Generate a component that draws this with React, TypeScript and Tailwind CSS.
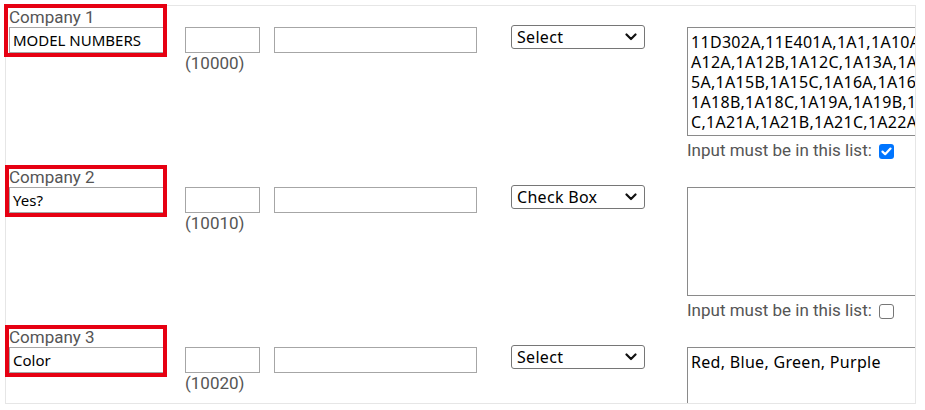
import React from "react";

const labelFont = { fontFamily: "Roboto, 'Liberation Sans', sans-serif" };
const fieldFont = { fontFamily: "'Noto Sans', 'Open Sans', sans-serif" };

function Chevron() {
  return (
    <svg width="12" height="8" viewBox="0 0 12 8" className="shrink-0">
      <polyline points="1.5,1.5 6,6 10.5,1.5" fill="none" stroke="#111" strokeWidth="2.2" strokeLinecap="round" strokeLinejoin="round" />
    </svg>
  );
}

function Checkbox({ checked }: { checked: boolean }) {
  if (checked) {
    return (
      <div className="w-[15px] h-[15px] rounded-[3px] bg-[#0075ff] flex items-center justify-center ml-[7px] shrink-0">
        <svg width="11" height="9" viewBox="0 0 11 9">
          <polyline points="1.5,4.6 4.2,7.2 9.5,1.6" fill="none" stroke="#fff" strokeWidth="2.2" strokeLinecap="round" strokeLinejoin="round" />
        </svg>
      </div>
    );
  }
  return <div className="w-[15px] h-[15px] rounded-[3px] border border-[#767676] bg-white ml-[7px] shrink-0" />;
}

type RowProps = {
  company: string;
  value: string;
  code: string;
  type: string;
  lines: string[];
  checked: boolean;
  showCheck: boolean;
};

function Row({ company, value, code, type, lines, checked, showCheck }: RowProps) {
  return (
    <div className="flex items-start h-[160px] shrink-0">
      <div className="ml-[3px] w-[155px] flex flex-col shrink-0">
        <div className="h-[20px] leading-[20px] text-[17px] text-[#555] whitespace-nowrap" style={labelFont}>
          {company}
        </div>
        <div
          className="h-[26px] border border-[#a6a6a6] bg-white pl-[3px] flex items-center text-[15px] text-black whitespace-nowrap"
          style={fieldFont}
        >
          {value}
        </div>
      </div>
      <div className="ml-[21px] w-[75px] mt-[20px] flex flex-col shrink-0">
        <div className="h-[26px] border border-[#a6a6a6] bg-white" />
        <div className="h-[20px] leading-[20px] text-[17px] text-[#555] whitespace-nowrap" style={labelFont}>
          {code}
        </div>
      </div>
      <div className="ml-[14px] w-[203px] mt-[20px] h-[26px] border border-[#a6a6a6] bg-white shrink-0" />
      <div
        className="ml-[34px] w-[134px] mt-[18px] h-[24px] border border-[#767676] rounded-[3px] bg-white flex items-center justify-between pl-[5px] pr-[7px] text-[16px] text-black shrink-0"
        style={fieldFont}
      >
        <span className="leading-[20px] tracking-[0.3px]">{type}</span>
        <Chevron />
      </div>
      <div className="ml-[42px] mt-[20px] flex flex-col shrink-0">
        <div
          className="w-[320px] h-[109px] border border-[#8a8a8a] bg-white pl-[3px] pt-[4px] text-[16px] leading-[20px] text-black overflow-hidden tracking-[0.3px]"
          style={fieldFont}
        >
          {lines.map((l, i) => (
            <div key={i} className="whitespace-nowrap">
              {l}
            </div>
          ))}
        </div>
        {showCheck && (
          <div className="mt-[5px] h-[20px] flex items-center text-[17px] text-[#555] whitespace-nowrap" style={labelFont}>
            <span>Input must be in this list:</span>
            <Checkbox checked={checked} />
          </div>
        )}
      </div>
    </div>
  );
}

export default function App() {
  return (
    <div className="relative w-[925px] h-[410px] bg-white overflow-hidden">
      <div className="absolute left-[5px] top-[5px] w-[911px] h-[399px] border border-[#e6e6e6] overflow-hidden flex flex-col pt-[1px]">
        <Row
          company="Company 1"
          value="MODEL NUMBERS"
          code="(10000)"
          type="Select"
          lines={[
            "11D302A,11E401A,1A1,1A10A",
            "A12A,1A12B,1A12C,1A13A,1A",
            "5A,1A15B,1A15C,1A16A,1A16",
            "1A18B,1A18C,1A19A,1A19B,1",
            "C,1A21A,1A21B,1A21C,1A22A",
          ]}
          checked={true}
          showCheck={true}
        />
        <Row
          company="Company 2"
          value="Yes?"
          code="(10010)"
          type="Check Box"
          lines={[]}
          checked={false}
          showCheck={true}
        />
        <Row
          company="Company 3"
          value="Color"
          code="(10020)"
          type="Select"
          lines={["Red, Blue, Green, Purple"]}
          checked={false}
          showCheck={false}
        />
      </div>
      <div className="absolute left-[4px] top-[4px] w-[163px] h-[53px] border-4 border-[#e60012]" />
      <div className="absolute left-[5px] top-[165px] w-[162px] h-[52px] border-4 border-[#e60012]" />
      <div className="absolute left-[5px] top-[325px] w-[162px] h-[52px] border-4 border-[#e60012]" />
    </div>
  );
}
